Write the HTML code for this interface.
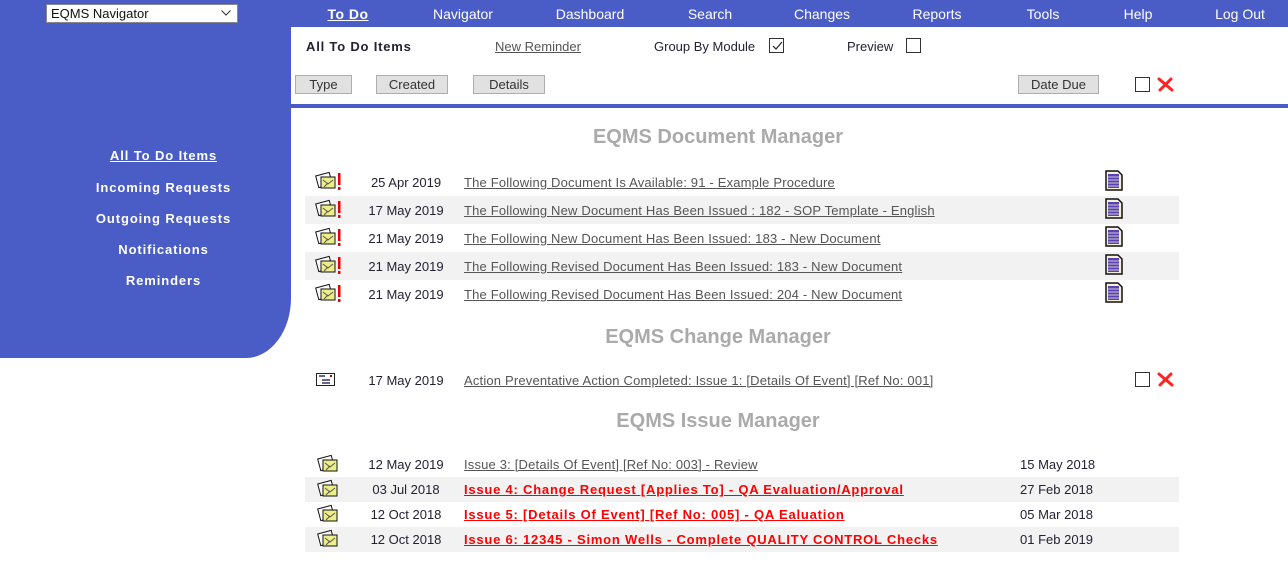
<!DOCTYPE html>
<html><head><style>
*{margin:0;padding:0;box-sizing:border-box}
body{width:1288px;height:564px;position:relative;background:#fff;font-family:"Liberation Sans",Arial,sans-serif;font-size:13px;color:#223;overflow:hidden}
.a{position:absolute;white-space:nowrap}
#top{position:absolute;left:0;top:0;width:1288px;height:27px;background:#4a5cc6}
#side{position:absolute;left:0;top:0;width:291px;height:358px;background:#4a5cc6;border-bottom-right-radius:45px 60px}
.nav{position:absolute;top:6px;color:#fff;font-size:14px;transform:translateX(-50%);white-space:nowrap}
.sl{position:absolute;left:0;width:327px;text-align:center;color:#fff;font-weight:bold;font-size:13px;letter-spacing:0.9px}
.btn{position:absolute;top:75px;height:19px;background:#e1e1e1;border:1px solid #adadad;font-size:13px;color:#333;text-align:center;line-height:17px}
.cb{position:absolute;width:15px;height:15px;border:1px solid #333;background:#fff}
.h{position:absolute;left:305px;width:826px;text-align:center;font-weight:bold;font-size:20px;color:#aaa}
.stripe{position:absolute;left:305px;width:874px;background:#f2f2f2}
.d{position:absolute;left:350px;width:112px;text-align:center;color:#223;white-space:nowrap}
.l{position:absolute;left:464px;color:#555;text-decoration:underline;white-space:nowrap;letter-spacing:0.18px}
.r{position:absolute;left:464px;color:#f00;font-weight:bold;text-decoration:underline;white-space:nowrap;letter-spacing:0.78px}
.dd{position:absolute;left:1020px;color:#223;white-space:nowrap}
</style></head><body>
<div id="top"></div>
<div id="side"></div>
<div class="a" style="left:46px;top:4px;width:192px;height:19px;background:#fff;border:1px solid #888;font-size:13px;padding-left:4px;line-height:17px;color:#111">EQMS Navigator<svg style="position:absolute;right:6px;top:5px" width="10" height="6"><path d="M0.5 0.5l4.5 4.5 4.5-4.5" stroke="#333" fill="none"/></svg></div>
<div class="nav" style="left:348px;font-weight:bold;text-decoration:underline;letter-spacing:0.5px">To Do</div>
<div class="nav" style="left:463px">Navigator</div>
<div class="nav" style="left:590px">Dashboard</div>
<div class="nav" style="left:710px">Search</div>
<div class="nav" style="left:822px">Changes</div>
<div class="nav" style="left:937px">Reports</div>
<div class="nav" style="left:1043px">Tools</div>
<div class="nav" style="left:1138px">Help</div>
<div class="nav" style="left:1240px">Log Out</div>
<div class="sl" style="top:148px;text-decoration:underline">All To Do Items</div>
<div class="sl" style="top:180px">Incoming Requests</div>
<div class="sl" style="top:211px">Outgoing Requests</div>
<div class="sl" style="top:242px">Notifications</div>
<div class="sl" style="top:273px">Reminders</div>

<div class="a" style="left:306px;top:39px;font-weight:bold;font-size:13px;letter-spacing:0.8px">All To Do Items</div>
<div class="a" style="left:495px;top:39px;color:#555;text-decoration:underline">New Reminder</div>
<div class="a" style="left:654px;top:39px">Group By Module</div>
<div class="cb" style="left:769px;top:38px"><svg style="position:absolute;left:1px;top:1px" width="12" height="12"><path d="M2 6l3 3 6-7" stroke="#222" fill="none" stroke-width="1.2"/></svg></div>
<div class="a" style="left:847px;top:39px">Preview</div>
<div class="cb" style="left:906px;top:38px"></div>
<div class="btn" style="left:295px;width:57px">Type</div>
<div class="btn" style="left:376px;width:72px">Created</div>
<div class="btn" style="left:473px;width:72px">Details</div>
<div class="btn" style="left:1018px;width:81px">Date Due</div>
<div class="cb" style="left:1135px;top:77px"></div>
<svg class="a" style="left:1157px;top:77px" width="17" height="15"><path d="M2 2l13 11M14 2L3 13" stroke="#f22" stroke-width="3" stroke-linecap="round"/></svg>
<div class="a" style="left:291px;top:104px;width:997px;height:4px;background:#4a5cc6"></div>

<div class="h" style="top:126px">EQMS Document Manager</div>
<div class="stripe" style="top:196px;height:28px"></div>
<div class="stripe" style="top:252px;height:28px"></div>
<div class="h" style="top:326px">EQMS Change Manager</div>
<div class="h" style="top:410px">EQMS Issue Manager</div>
<div class="stripe" style="top:477px;height:25px"></div>
<div class="stripe" style="top:527px;height:25px"></div>

<svg class="a" style="left:315px;top:172px" width="28" height="136">
<g id="ic"><rect x="2" y="2" width="14" height="12" fill="#fff" stroke="#111" transform="rotate(-15 9 8)"/><rect x="6" y="5" width="14" height="11" fill="#ee8" stroke="#111"/><path d="M8 8l5 4 5-4M9 15l4-4" stroke="#555" fill="none"/><rect x="23" y="1" width="2.5" height="12" fill="#e00"/><rect x="23" y="15" width="2.5" height="3" fill="#e00"/></g>
<use href="#ic" y="28"/><use href="#ic" y="56"/><use href="#ic" y="84"/><use href="#ic" y="112"/>
</svg>
<svg class="a" style="left:1105px;top:170px" width="20" height="136">
<g id="dc"><path d="M1 1h12l4 4v15H1z" fill="#f4f0d8" stroke="#111" stroke-width="1.5"/><rect x="3" y="4" width="11" height="14" fill="#5a40b0"/><path d="M3 7h11M3 10h11M3 13h11M3 16h11" stroke="#ccc" stroke-width="1"/></g>
<use href="#dc" y="28"/><use href="#dc" y="56"/><use href="#dc" y="84"/><use href="#dc" y="112"/>
</svg>
<div class="d" style="top:175px">25 Apr 2019</div><div class="l" style="top:175px">The Following Document Is Available: 91 - Example Procedure</div>
<div class="d" style="top:203px">17 May 2019</div><div class="l" style="top:203px">The Following New Document Has Been Issued : 182 - SOP Template - English</div>
<div class="d" style="top:231px">21 May 2019</div><div class="l" style="top:231px">The Following New Document Has Been Issued: 183 - New Document</div>
<div class="d" style="top:259px">21 May 2019</div><div class="l" style="top:259px">The Following Revised Document Has Been Issued: 183 - New Document</div>
<div class="d" style="top:287px">21 May 2019</div><div class="l" style="top:287px">The Following Revised Document Has Been Issued: 204 - New Document</div>

<svg class="a" style="left:316px;top:373px" width="20" height="14"><rect x="0.5" y="0.5" width="18" height="12" fill="#fff" stroke="#222"/><path d="M3 3h6M6 7h8M6 10h8" stroke="#336" stroke-width="1.5"/><rect x="14" y="2" width="2" height="2" fill="#a00"/></svg>
<div class="d" style="top:373px">17 May 2019</div><div class="l" style="top:373px">Action Preventative Action Completed: Issue 1: [Details Of Event] [Ref No: 001]</div>
<div class="cb" style="left:1135px;top:372px"></div>
<svg class="a" style="left:1157px;top:372px" width="17" height="15"><path d="M2 2l13 11M14 2L3 13" stroke="#f22" stroke-width="3" stroke-linecap="round"/></svg>

<svg class="a" style="left:317px;top:455px" width="22" height="96">
<g id="ic2"><rect x="2" y="2" width="14" height="12" fill="#fff" stroke="#111" transform="rotate(-15 9 8)"/><rect x="6" y="5" width="14" height="11" fill="#ee8" stroke="#111"/><path d="M8 8l5 4 5-4M9 15l4-4" stroke="#555" fill="none"/></g>
<use href="#ic2" y="25"/><use href="#ic2" y="50"/><use href="#ic2" y="75"/>
</svg>
<div class="d" style="top:457px">12 May 2019</div><div class="l" style="top:457px">Issue 3: [Details Of Event] [Ref No: 003] - Review</div><div class="dd" style="top:457px">15 May 2018</div>
<div class="d" style="top:482px">03 Jul 2018</div><div class="r" style="top:482px">Issue 4: Change Request [Applies To] - QA Evaluation/Approval</div><div class="dd" style="top:482px">27 Feb 2018</div>
<div class="d" style="top:507px">12 Oct 2018</div><div class="r" style="top:507px">Issue 5: [Details Of Event] [Ref No: 005] - QA Ealuation</div><div class="dd" style="top:507px">05 Mar 2018</div>
<div class="d" style="top:532px">12 Oct 2018</div><div class="r" style="top:532px">Issue 6: 12345 - Simon Wells - Complete QUALITY CONTROL Checks</div><div class="dd" style="top:532px">01 Feb 2019</div>
</body></html>
